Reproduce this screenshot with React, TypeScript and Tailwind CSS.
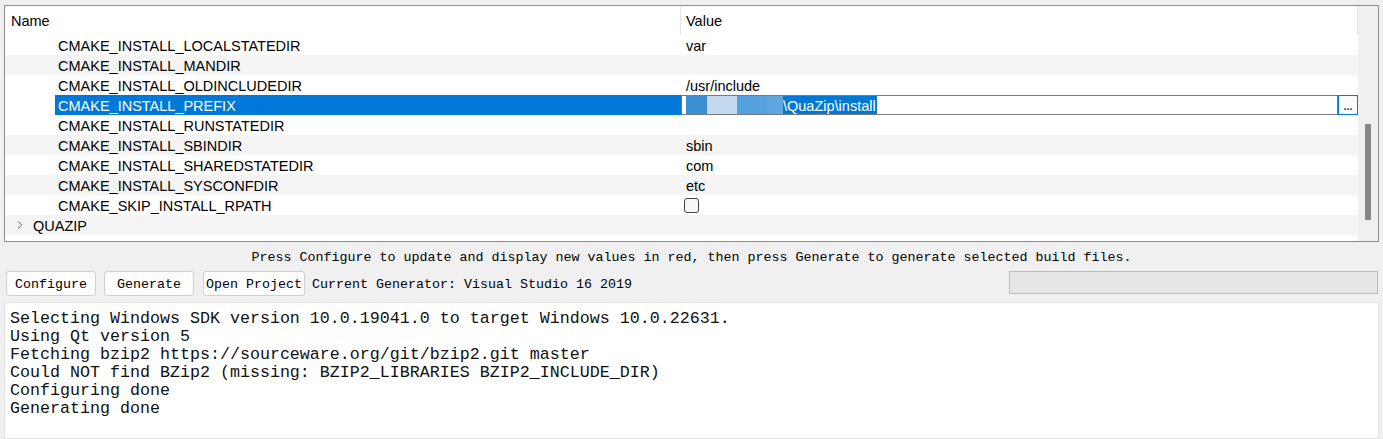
import { ChevronRight } from "lucide-react";

const sans = "font-['Liberation_Sans',Arial,sans-serif] text-[14.5px] text-black";
const simsun = "font-['Liberation_Mono',monospace] text-[13.33px] text-black";

type Row = { name: string; value?: string; checkbox?: boolean };

const rows: Row[] = [
  { name: "CMAKE_INSTALL_LOCALSTATEDIR", value: "var" },
  { name: "CMAKE_INSTALL_MANDIR", value: "" },
  { name: "CMAKE_INSTALL_OLDINCLUDEDIR", value: "/usr/include" },
  { name: "CMAKE_INSTALL_PREFIX" },
  { name: "CMAKE_INSTALL_RUNSTATEDIR", value: "" },
  { name: "CMAKE_INSTALL_SBINDIR", value: "sbin" },
  { name: "CMAKE_INSTALL_SHAREDSTATEDIR", value: "com" },
  { name: "CMAKE_INSTALL_SYSCONFDIR", value: "etc" },
  { name: "CMAKE_SKIP_INSTALL_RPATH", checkbox: true },
];

const logLines = [
  "Selecting Windows SDK version 10.0.19041.0 to target Windows 10.0.22631.",
  "Using Qt version 5",
  "Fetching bzip2 https://sourceware.org/git/bzip2.git master",
  "Could NOT find BZip2 (missing: BZIP2_LIBRARIES BZIP2_INCLUDE_DIR)",
  "Configuring done",
  "Generating done",
];

function SelectedRow({ name }: { name: string }) {
  return (
    <div className="flex h-[20px] bg-white">
      <div className="w-[676px] flex pl-[50px]">
        <div className="flex-1 bg-[#0078d7] flex items-center pl-[3px] pt-[2px]">
          <span className={`${sans} !text-white leading-none`}>{name}</span>
        </div>
      </div>
      <div className="flex-1 flex bg-[#0078d7]">
        <div className="flex-1 flex items-center bg-white border border-[#7a7a7a] pl-[4px]">
          <div className="flex h-[18px] items-stretch">
            <div className="w-[21px] bg-[#3a8ed4]" />
            <div className="w-[30px] bg-[#c4daf0]" />
            <div className="w-[30px] bg-[#55a2df]" />
            <div className="w-[16px] bg-[#5fa7e1]" />
            <div className={`${sans} !text-white bg-[#0078d7] flex items-center pt-[2px] pr-[1px] leading-none`}>
              \QuaZip\install
            </div>
          </div>
        </div>
        <div className="w-[20px] h-[20px] bg-[#fbfbfb] border border-[#0078d7] rounded-[2px] flex items-end justify-center pb-[2px]">
          <span className="font-['Liberation_Sans',sans-serif] text-[11px] leading-none font-bold text-[#333]">...</span>
        </div>
      </div>
    </div>
  );
}

export default function App() {
  return (
    <div className="w-[1383px] h-[439px] bg-[#f0f0f0] overflow-hidden flex flex-col">
      {/* cache tree */}
      <div className="mx-[4px] mt-[5px] h-[237px] border border-[#8c8c8c] flex">
        <div className="flex-1 flex flex-col bg-white">
          <div className="h-[29px] flex">
            <div className={`w-[675px] flex items-center pl-[6px] pt-[3px] ${sans}`}>Name</div>
            <div className="w-px bg-[#e5e5e5]" />
            <div className={`flex-1 flex items-center pl-[5px] pt-[3px] ${sans}`}>Value</div>
            <div className="w-px bg-[#e5e5e5]" />
          </div>
          {rows.map((r, i) =>
            r.value === undefined && !r.checkbox ? (
              <SelectedRow key={r.name} name={r.name} />
            ) : (
              <div key={r.name} className={`h-[20px] flex items-center pt-[2px] ${i % 2 === 1 ? "bg-[#f4f4f4]" : "bg-white"}`}>
                <div className={`w-[676px] pl-[53px] ${sans} leading-none`}>{r.name}</div>
                <div className={`flex-1 pl-[5px] ${sans} leading-none`}>
                  {r.checkbox ? (
                    <div className="ml-[-2px] mt-[-2px] w-[15px] h-[15px] rounded-[3px] border border-[#444] bg-[#f6f6f6]" />
                  ) : (
                    r.value
                  )}
                </div>
              </div>
            )
          )}
          <div className="h-[20px] flex items-center bg-[#f4f4f4]">
            <ChevronRight className="ml-[8px] w-[14px] h-[14px] text-[#5a5a5a] shrink-0" strokeWidth={1.5} />
            <span className={`ml-[6px] pt-[3px] ${sans} leading-none`}>QUAZIP</span>
          </div>
          <div className="flex-1" />
        </div>
        <div className="w-[20px] bg-[#f0f0f0] pt-[118px] pl-[7px]">
          <div className="w-[6px] h-[96px] bg-[#868686]" />
        </div>
      </div>

      {/* hint */}
      <div className={`h-[28px] flex items-center justify-center pt-[3px] ${simsun}`}>
        Press Configure to update and display new values in red, then press Generate to generate selected build files.
      </div>

      {/* buttons */}
      <div className="h-[32px] flex items-start pt-[1px] pl-[6px] pr-[5px]">
        <button className={`h-[25px] w-[90px] pt-[2px] bg-[#fdfdfd] border border-[#d0d0d0] rounded-[3px] ${simsun}`}>Configure</button>
        <button className={`ml-[8px] h-[25px] w-[90px] pt-[2px] bg-[#fdfdfd] border border-[#d0d0d0] rounded-[3px] ${simsun}`}>Generate</button>
        <button className={`ml-[9px] h-[25px] w-[102px] pt-[2px] bg-[#fdfdfd] border border-[#d0d0d0] rounded-[3px] ${simsun}`}>Open Project</button>
        <span className={`ml-[7px] h-[25px] pt-[2px] flex items-center ${simsun}`}>Current Generator: Visual Studio 16 2019</span>
        <div className="ml-auto w-[369px] h-[23px] bg-[#e6e6e6] border border-[#bcbcbc]" />
      </div>

      {/* output log */}
      <div className="flex-1 mx-[4px] bg-white border border-[#e3e3e3] pt-[7px] pl-[5px]">
        {logLines.map((l) => (
          <div key={l} className="font-['Liberation_Mono','Courier_New',monospace] text-[16.67px] leading-[18px] text-[#111] whitespace-pre">
            {l}
          </div>
        ))}
      </div>
    </div>
  );
}
